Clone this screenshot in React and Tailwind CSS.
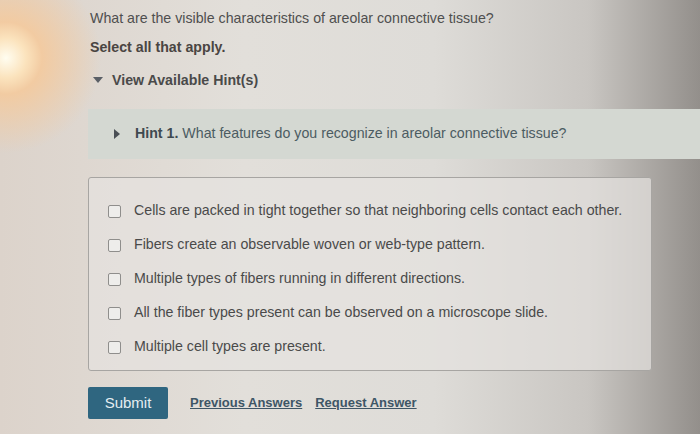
import React from "react";

const options = [
  "Cells are packed in tight together so that neighboring cells contact each other.",
  "Fibers create an observable woven or web-type pattern.",
  "Multiple types of fibers running in different directions.",
  "All the fiber types present can be observed on a microscope slide.",
  "Multiple cell types are present.",
];

export default function App() {
  return (
    <div className="w-[700px] h-[434px] overflow-hidden font-['Liberation_Sans',Arial,sans-serif] text-[14.2px] text-[#4f4f4f] bg-[radial-gradient(circle_at_6px_58px,#fffdf0_0,#fbe3bd_20px,#f2cba2_36px,transparent_95px),linear-gradient(to_right,#dcd3cb,#e2dfda_35%,#dedcd8_62%,#c9c6c2_84%,#938f8b)]">
      <div className="pl-[90px] pt-[9px]">
        <p className="leading-[18px]">What are the visible characteristics of areolar connective tissue?</p>
        <p className="mt-[11px] leading-[18px] font-bold text-[#4a4542]">Select all that apply.</p>
        <div className="mt-[15px] flex items-center gap-[9px] pl-[3px]">
          <span className="w-0 h-0 border-l-[5px] border-r-[5px] border-t-[6px] border-l-transparent border-r-transparent border-t-[#5a5f66]" />
          <span className="font-bold text-[#4a4a4a] leading-[18px]">View Available Hint(s)</span>
        </div>
      </div>

      <div className="ml-[88px] mt-[20px] h-[50px] bg-[#d4d8d2] flex items-center pl-[26px]">
        <span className="w-0 h-0 border-t-[5px] border-b-[5px] border-l-[6px] border-t-transparent border-b-transparent border-l-[#4a4f55]" />
        <span className="ml-[15px] font-bold text-[#3f4a50]">Hint 1.</span>
        <span className="ml-[4px] text-[#4c5c62]">What features do you recognize in areolar connective tissue?</span>
      </div>

      <div className="ml-[88px] mt-[18px] w-[564px] h-[194px] border border-[#a7a5a2] rounded-[3px] bg-[#e5e3e0]/70 pt-[16px] pl-[19px]">
        {options.map((o) => (
          <div key={o} className="flex items-center h-[34px]">
            <span className="w-[13px] h-[13px] border border-[#8f8e8c] rounded-[2px] bg-[#eeedeb]" />
            <span className="ml-[13px] text-[#4a4a4a]">{o}</span>
          </div>
        ))}
      </div>

      <div className="ml-[88px] mt-[16px] flex items-center">
        <button className="w-[80px] h-[32px] bg-[#2f6680] rounded-[2px] text-[#e4eef2] text-[15px]">Submit</button>
        <span className="ml-[22px] font-bold underline text-[13px] text-[#3e5666]">Previous Answers</span>
        <span className="ml-[13px] font-bold underline text-[13px] text-[#3e5666]">Request Answer</span>
      </div>
    </div>
  );
}
